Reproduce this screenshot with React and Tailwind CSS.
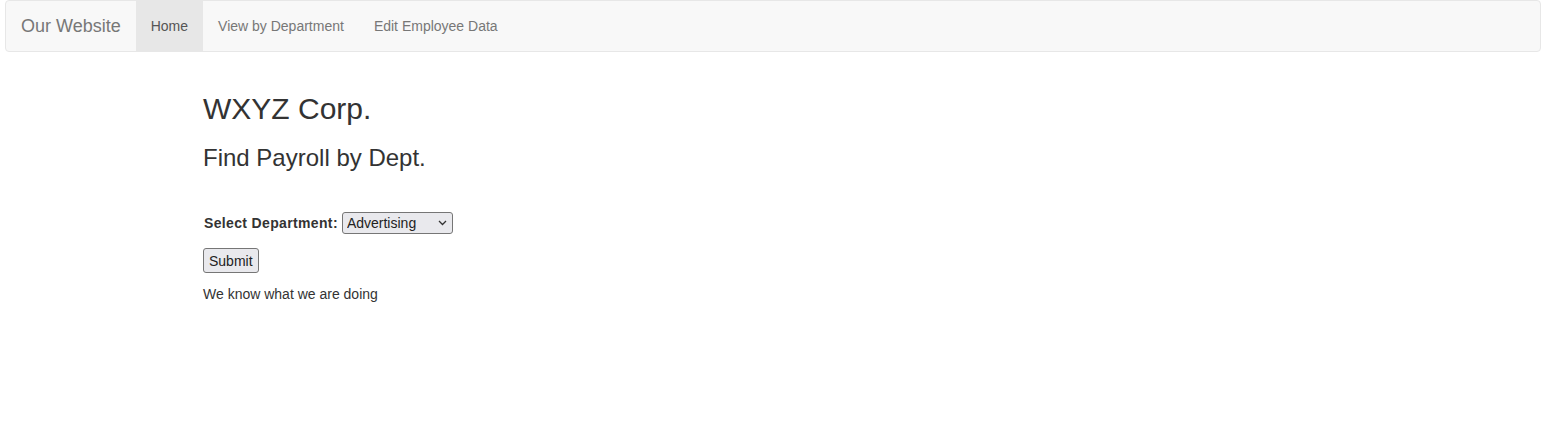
import React from 'react';

export default function App() {
  const font = { fontFamily: '"Liberation Sans", Arial, sans-serif' };
  return (
    <div className="min-h-[429px] bg-white text-[#333] text-[14px] leading-[20px]" style={font}>
      {/* navbar */}
      <nav className="ml-[5px] mr-[7px] flex h-[52px] rounded-[4px] border border-[#e7e7e7] bg-[#f8f8f8]">
        <a className="flex h-[50px] items-center px-[15px] text-[18px] text-[#777]">Our Website</a>
        <a className="flex h-[50px] items-center bg-[#e7e7e7] px-[15px] text-[#555]">Home</a>
        <a className="flex h-[50px] items-center px-[15px] text-[#777]">View by Department</a>
        <a className="flex h-[50px] items-center px-[15px] text-[#777]">Edit Employee Data</a>
      </nav>

      <div className="mx-auto w-[1170px] px-[14px] pt-[20px]">
        <h2 className="mt-[20px] mb-[10px] text-[30px] leading-[33px] font-normal">WXYZ Corp.</h2>
        <h3 className="mt-[20px] mb-[10px] text-[24px] leading-[26px] font-normal">Find Payroll by Dept.</h3>

        <form className="pt-[31px]">
          <div className="flex items-center gap-[4px]">
            <label className="pl-[1px] text-[14px] font-bold tracking-[0.35px]">Select Department:</label>
            <div className="relative">
              <select className="h-[22px] w-[111px] appearance-none rounded-[3px] border border-[#767676] bg-[#e9e9ed] pl-[4px] text-[14px] text-[#222] outline-none">
                <option>Advertising</option>
                <option>Sales</option>
                <option>Engineering</option>
              </select>
              <svg className="pointer-events-none absolute right-[6px] top-[8px]" width="9" height="6" viewBox="0 0 9 6">
                <path d="M1 1 L4.5 4.5 L8 1" fill="none" stroke="#333" strokeWidth="1.3" />
              </svg>
            </div>
          </div>
          <button type="button" className="mt-[14px] h-[25px] rounded-[3px] border border-[#767676] bg-[#e9e9ed] px-[5px] text-[14px] text-[#222]">
            Submit
          </button>
        </form>
        <p className="mt-[11px] text-[14px]">We know what we are doing</p>
      </div>
    </div>
  );
}
